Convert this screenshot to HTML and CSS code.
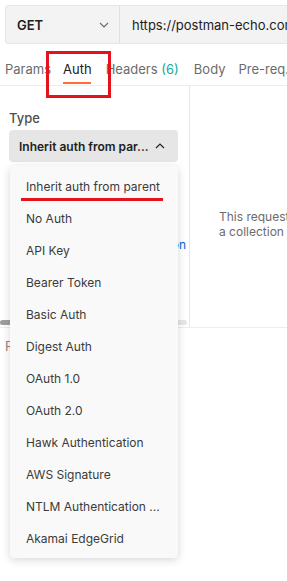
FILE: index.html
```html
<!DOCTYPE html>
<html lang="en">
<head>
    <meta charset="UTF-8">
    <meta name="viewport" content="width=device-width, initial-scale=1.0">
    <title>Auth</title>
    <link rel="stylesheet" href="styles.css">
</head>
<body>
    <div class="request-bar">
        <div class="method">
            <span>GET</span>
            <svg class="chevron" width="10" height="6" viewBox="0 0 10 6"><path d="M1 1l4 4 4-4" fill="none" stroke="#6b6b6b" stroke-width="1.1"/></svg>
        </div>
        <div class="url">https://postman-echo.com/get</div>
    </div>

    <div class="tabs">
        <span class="tab">Params</span>
        <span class="tab active">Auth</span>
        <span class="tab wide">Headers <span class="count">(6)</span></span>
        <span class="tab">Body</span>
        <span class="tab">Pre-req.</span>
        <div class="highlight-box"></div>
    </div>

    <div class="auth-panel">
        <div class="auth-left">
            <div class="label">Type</div>
            <div class="type-select">
                <div class="select-button">
                    <span>Inherit auth from par...</span>
                    <svg width="10" height="6" viewBox="0 0 10 6"><path d="M1 5l4-4 4 4" fill="none" stroke="#212121" stroke-width="1.2"/></svg>
                </div>
                <ul class="menu">
                    <li class="menu-item">Inherit auth from parent<span class="underline-mark"></span></li>
                    <li class="menu-item">No Auth</li>
                    <li class="menu-item">API Key</li>
                    <li class="menu-item">Bearer Token</li>
                    <li class="menu-item">Basic Auth</li>
                    <li class="menu-item">Digest Auth</li>
                    <li class="menu-item">OAuth 1.0</li>
                    <li class="menu-item">OAuth 2.0</li>
                    <li class="menu-item">Hawk Authentication</li>
                    <li class="menu-item">AWS Signature</li>
                    <li class="menu-item">NTLM Authentication ...</li>
                    <li class="menu-item">Akamai EdgeGrid</li>
                </ul>
            </div>
            <p class="help"><a href="#">Learn more about authorization</a></p>
            <div class="scrollbar"><div class="thumb"></div></div>
        </div>
        <div class="auth-right">
            <p class="info">This request is using an authorization helper from<br>a collection named Postman Echo</p>
        </div>
    </div>

    <div class="response">Response</div>
</body>
</html>
```

FILE: styles.css
```css
body {
    margin: 0;
    width: 287px;
    height: 581px;
    overflow: hidden;
    background: #fff;
    font-family: 'Inter', 'Noto Sans', sans-serif;
    color: #212121;
    position: relative;
}

.request-bar {
    display: flex;
    height: 37px;
    margin: 5px 0 0 5px;
    background-color: #f3f3f3;
    border: 1px solid #e6e6e6;
    border-right: none;
    border-radius: 4px 0 0 4px;
    white-space: nowrap;
    overflow: hidden;
}

.method {
    display: flex;
    flex-shrink: 0;
    align-items: center;
    justify-content: space-between;
    width: 114px;
    box-sizing: border-box;
    padding: 0 10px 0 11px;
    border-right: 1px solid #e0e0e0;
    font-size: 13px;
    font-weight: 600;
}

.url {
    display: flex;
    align-items: center;
    padding-left: 12px;
    font-size: 13px;
    color: #212121;
}

.tabs {
    position: relative;
    display: flex;
    height: 30px;
    margin-top: 11px;
    padding-left: 5px;
    border-bottom: 1px solid #ededed;
    white-space: nowrap;
}

.tab {
    position: relative;
    margin-right: 13px;
    padding-top: 6px;
    font-size: 13px;
    color: #6b6b6b;
}

.tab.wide {
    margin-right: 15px;
}

.tab.active {
    color: #212121;
    margin-left: -1px;
    margin-right: 14px;
}

.tab.active::after {
    content: '';
    position: absolute;
    left: 0;
    right: 1px;
    bottom: 1px;
    height: 2px;
    background-color: #ff6c37;
}

.count {
    color: #13a89e;
}

.highlight-box {
    position: absolute;
    left: 46px;
    top: -4px;
    width: 59px;
    height: 41px;
    border: 3px solid #e5121e;
}

.auth-panel {
    display: flex;
    height: 241px;
    border-bottom: 1px solid #ededed;
}

.auth-left {
    position: relative;
    width: 190px;
    flex-shrink: 0;
    box-sizing: border-box;
    padding: 24px 0 0 9px;
    border-right: 1px solid #e6e6e6;
}

.label {
    font-size: 13px;
    font-weight: 500;
    line-height: 16px;
    color: #505050;
    margin-bottom: 4px;
}

.type-select {
    position: relative;
    width: 169px;
    z-index: 2;
}

.select-button {
    display: flex;
    align-items: center;
    justify-content: space-between;
    height: 32px;
    padding: 0 13px 0 10px;
    background-color: #e6e6e6;
    border-radius: 4px;
    font-size: 12px;
    font-weight: 600;
}

.menu {
    position: absolute;
    top: 36px;
    left: 1px;
    width: 168px;
    margin: 0;
    padding: 4px 0;
    list-style: none;
    background-color: #f9f9f9;
    border-radius: 4px;
    box-shadow: 0 2px 8px rgba(0, 0, 0, 0.16);
}

.menu-item {
    position: relative;
    display: flex;
    align-items: center;
    height: 32px;
    padding-left: 16px;
    font-size: 12px;
    color: #3b3b3b;
    white-space: nowrap;
}

.underline-mark {
    position: absolute;
    left: 11px;
    width: 142px;
    bottom: 1px;
    height: 3px;
    background-color: #e5121e;
}

.help {
    margin: 75px 0 0 4px;
    padding-right: 3px;
    font-size: 12px;
    line-height: 16px;
    white-space: nowrap;
    overflow: hidden;
    direction: rtl;
    text-align: right;
}

.help a {
    color: #0265d2;
    text-decoration: none;
}

.scrollbar {
    position: absolute;
    left: 0;
    right: 2px;
    bottom: 2px;
    height: 5px;
    border-radius: 3px;
    background-color: #e6e6e6;
}

.thumb {
    width: 110px;
    height: 100%;
    border-radius: 3px;
    background-color: #9e9e9e;
}

.auth-right {
    padding: 123px 0 0 29px;
    white-space: nowrap;
}

.info {
    margin: 0;
    font-size: 12px;
    line-height: 15px;
    color: #6b6b6b;
}

.response {
    padding: 10px 0 0 5px;
    font-size: 13px;
    color: #9a8478;
}
```
